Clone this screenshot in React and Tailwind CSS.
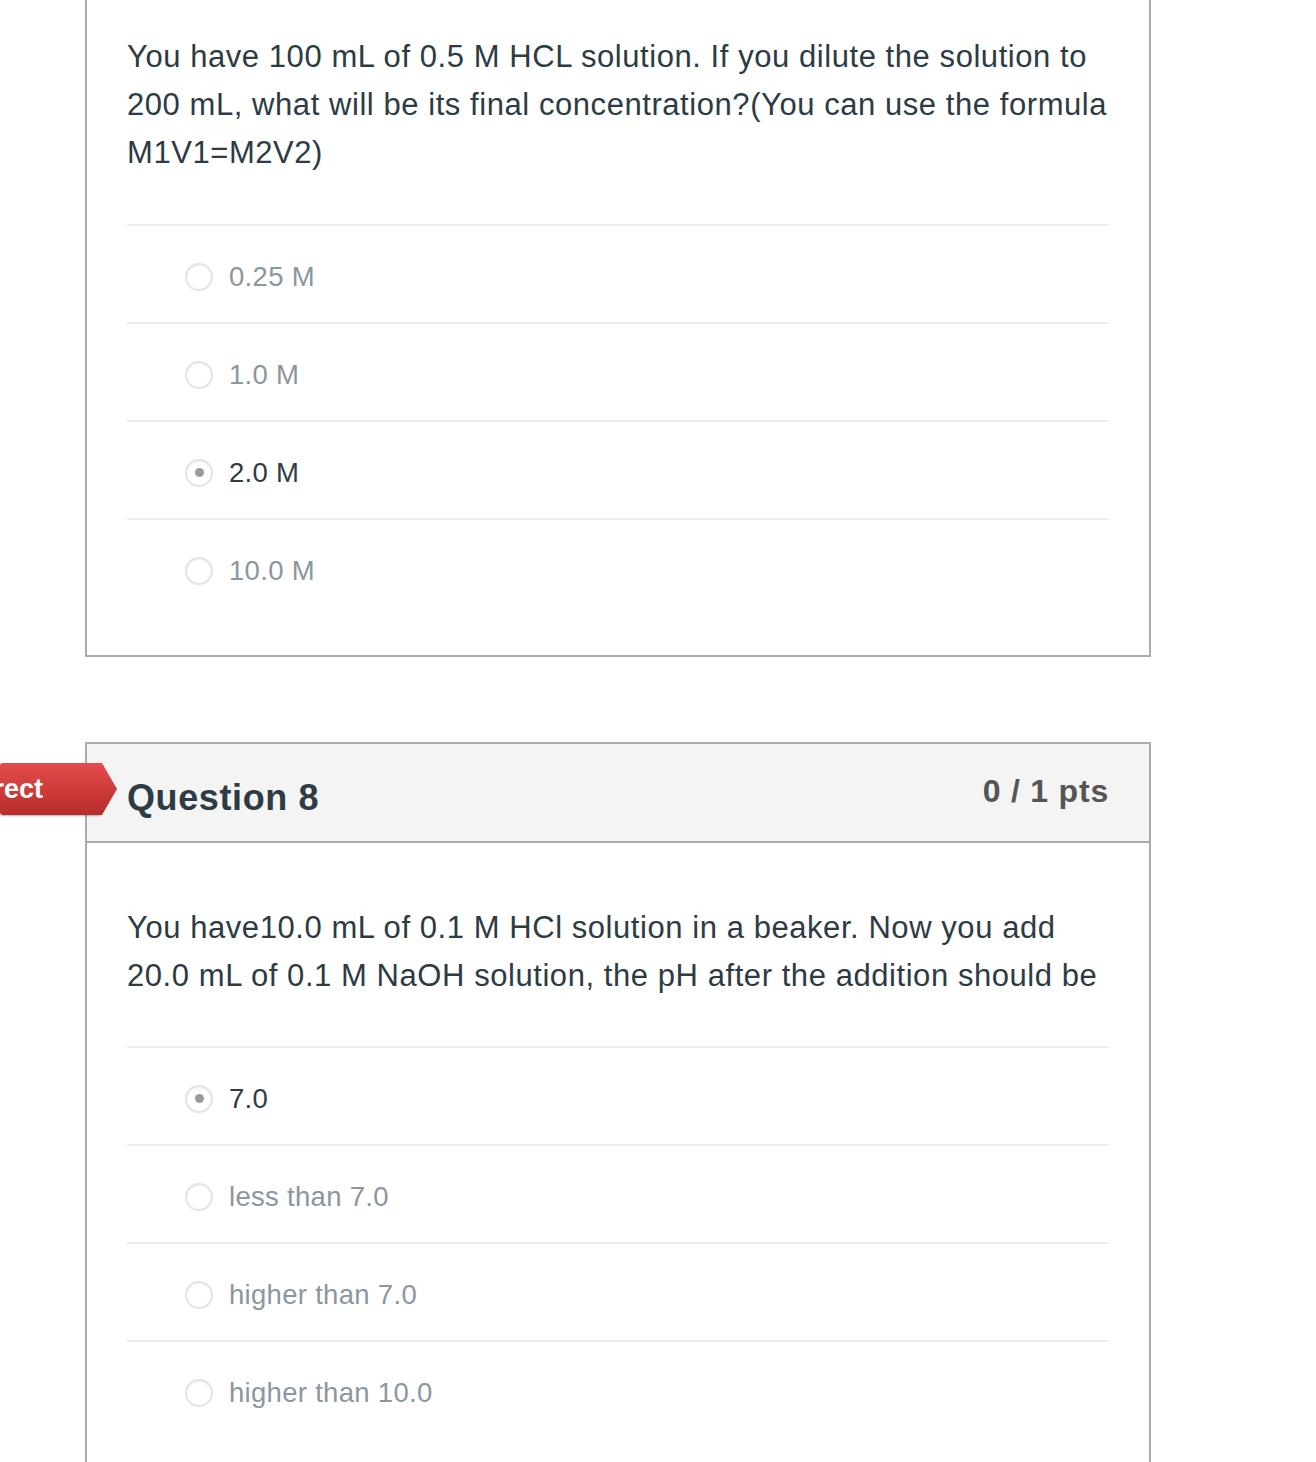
const font = { fontFamily: '"Liberation Sans", Arial, sans-serif' };

function Radio({ checked }) {
  return (
    <span className="flex h-[28px] w-[28px] shrink-0 items-center justify-center rounded-full border-2 border-[#e4e4e4] bg-white shadow-[inset_0_1px_2px_rgba(0,0,0,0.06)]">
      {checked && <span className="h-[9px] w-[9px] rounded-full bg-[#9a9a9a]" />}
    </span>
  );
}

function Answer({ label, checked }) {
  return (
    <div className="flex h-[98px] items-center gap-[16px] border-t-2 border-[#ececec] pt-[5px] pl-[58px]">
      <Radio checked={checked} />
      <span className={`text-[27.5px] tracking-[0.3px] ${checked ? "text-[#2d3b45]" : "text-[#8b969e]"}`}>{label}</span>
    </div>
  );
}

function Answers({ items }) {
  return (
    <div className="mx-[40px]">
      {items.map((a) => (
        <Answer key={a.label} label={a.label} checked={a.checked} />
      ))}
    </div>
  );
}

export default function App() {
  return (
    <div className="h-[1462px] overflow-hidden bg-white" style={font}>
      <div className="ml-[85px] w-[1066px]">
        <div className="-mt-[2px] border-2 border-[#acacac] bg-white pb-[39px]">
          <p className="px-[40px] pt-[33px] pb-[47px] text-[31px] leading-[48px] tracking-[0.56px] text-[#2d3b45]">
            You have 100 mL of 0.5 M HCL solution. If you dilute the solution to 200 mL, what will be its final concentration?(You can use the formula M1V1=M2V2)
          </p>
          <Answers
            items={[
              { label: "0.25 M" },
              { label: "1.0 M" },
              { label: "2.0 M", checked: true },
              { label: "10.0 M" },
            ]}
          />
        </div>

        <div className="relative mt-[85px] border-2 border-[#acacac] bg-white pb-[120px]">
          <div className="absolute -left-[87px] top-[19px] flex h-[52px] items-center">
            <div className="flex h-[52px] w-[99px] items-center justify-end rounded-l-[3px] bg-gradient-to-b from-[#e44c4c] to-[#b92b2b] pr-[56px] text-[27px] font-bold text-white shadow-[0_1px_2px_rgba(0,0,0,0.3)]">
              Incorrect
            </div>
            <svg width="20" height="52" viewBox="0 0 20 52" className="-ml-px">
              <defs>
                <linearGradient id="rg" x1="0" y1="0" x2="0" y2="1">
                  <stop offset="0" stopColor="#e44c4c" />
                  <stop offset="1" stopColor="#b92b2b" />
                </linearGradient>
              </defs>
              <polygon points="0,0 4,0 19,26 4,52 0,52" fill="url(#rg)" />
            </svg>
          </div>
          <div className="flex h-[99px] items-start justify-between border-b-2 border-[#acacac] bg-[#f4f4f4] px-[40px]">
            <h2 className="pt-[32px] text-[36px] font-bold leading-[44px] tracking-[0.6px] text-[#2d3b45]">Question 8</h2>
            <span className="pt-[27px] text-[32px] font-bold leading-[40px] tracking-[0.8px] text-[#555555]">0 / 1 pts</span>
          </div>
          <p className="px-[40px] pt-[61px] pb-[46px] text-[31px] leading-[48px] tracking-[0.56px] text-[#2d3b45]">
            You have10.0 mL of 0.1 M HCl solution in a beaker. Now you add 20.0 mL of 0.1 M NaOH solution, the pH after the addition should be
          </p>
          <Answers
            items={[
              { label: "7.0", checked: true },
              { label: "less than 7.0" },
              { label: "higher than 7.0" },
              { label: "higher than 10.0" },
            ]}
          />
        </div>
      </div>
    </div>
  );
}
